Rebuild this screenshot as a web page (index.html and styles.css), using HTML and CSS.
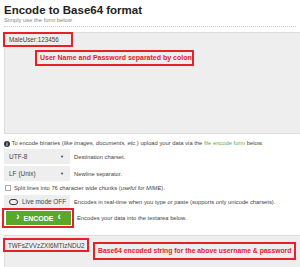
FILE: index.html
```html
<!DOCTYPE html>
<html>
<head><meta charset="utf-8"><link rel="stylesheet" href="styles.css"></head>
<body>
<div class="page">
  <h1 class="title">Encode to Base64 format</h1>
  <p class="sub">Simply use the form below</p>
  <div class="sep"></div>
  <div class="area top">
    <div class="mark input">MaleUser:123456</div>
    <div class="mark note n1">User Name and Password separated by colon</div>
  </div>
  <p class="info"><span class="ico">i</span> To encode binaries (<i>like images, documents, etc.</i>) upload your data via the <span class="link">file encode form</span> below.</p>
  <div class="row r1"><div class="sel">UTF-8<span class="arr">▼</span></div><span class="lbl">Destination charset.</span></div>
  <div class="row r2"><div class="sel">LF (Unix)<span class="arr">▼</span></div><span class="lbl">Newline separator.</span></div>
  <div class="row chk"><span class="box"></span><span class="lbl">Split lines into 76 character wide chunks (<i>useful for MIME</i>).</span></div>
  <div class="row r3"><div class="live"><span class="tog"></span>Live mode OFF</div><span class="lbl">Encodes in real-time when you type or paste (supports only unicode charsets).</span></div>
  <div class="row r4"><div class="encwrap"><div class="enc"><span class="chev">&#x203A;</span>ENCODE<span class="chev">&#x2039;</span></div></div><span class="lbl">Encodes your data into the textarea below.</span></div>
  <div class="area bottom">
    <div class="mark output">TWFsZVVzZXI6MTIzNDU2</div>
    <div class="mark note n2">Base64 encoded string for the above username &amp; password</div>
  </div>
</div>
</body>
</html>
```
FILE: styles.css
```css
* { box-sizing: border-box; }
html, body { margin: 0; padding: 0; background: #fff; }
body { font-family: "Liberation Sans", Arial, sans-serif; color: #333; width: 300px; height: 267px; overflow: hidden; }
.page { padding: 3px 0 0 4px; }
.title { font-size: 11.5px; font-weight: bold; margin: 0; line-height: 14px; color: #222; }
.sub { font-size: 5.8px; color: #888; margin: 0; line-height: 7px; }
.sep { border-top: 1px dotted #ccc; margin: 2px 4px 0 0; }
.area { background: #eeeeee; border: 1px solid #ddd; border-right: none; }
.top { height: 102px; margin-top: 5px; }
.mark { border: 2px solid #e8202a; display: block; white-space: nowrap; }
.input { font-size: 6.3px; color: #444; width: 70px; height: 15px; padding: 1px 0 0 4px; margin: -1px 0 0 -2px; line-height: 9px; }
.note { color: #e8202a; font-weight: bold; font-size: 7px; }
.n1 { width: 159px; height: 16px; padding: 2px 0 0 3px; margin: 3px 0 0 30px; }
.info { font-size: 5.8px; margin: 5px 0 0; line-height: 8px; color: #444; white-space: nowrap; }
.ico { display: inline-block; width: 6px; height: 6px; border-radius: 50%; background: #333; color: #fff; font-size: 5px; line-height: 6px; text-align: center; font-weight: bold; font-style: normal; vertical-align: -1px; }
.link { color: #6aa84f; }
.row { display: flex; align-items: center; gap: 4px; }
.r1 { margin-top: 2px; }
.r2 { margin-top: 2px; }
.sel { width: 66px; height: 15px; background: #eee; font-size: 6.5px; color: #444; padding: 0 0 0 5px; display: flex; align-items: center; justify-content: space-between; }
.arr { font-size: 4px; margin-right: 6px; color: #333; }
.lbl { font-size: 5.8px; color: #444; white-space: nowrap; }
.chk { margin-top: 1px; height: 12px; gap: 3px; }
.box { width: 6px; height: 6px; border: 1px solid #aaa; background: #fff; margin-left: 1px; }
.r3 { margin-top: 1px; }
.live { width: 66px; height: 13px; background: #eee; font-size: 6.4px; color: #444; display: flex; align-items: center; padding-left: 5px; gap: 4px; }
.tog { width: 9px; height: 6px; border: 1.5px solid #333; border-radius: 3px; }
.encwrap { border: 2px solid #e8202a; margin-left: -2px; padding: 1px 1px 1px 2px; }
.enc { width: 65px; height: 14px; background: #5aa829; color: #fff; font-weight: bold; font-size: 7px; display: flex; align-items: center; justify-content: center; gap: 4px; }
.chev { font-size: 10px; line-height: 10px; margin-top: -2px; }
.r4 .lbl { margin-left: -1px; }
.bottom { margin-top: 7px; height: 40px; padding-top: 2px; display: flex; align-items: flex-start; gap: 4px; }
.output { font-size: 6.3px; color: #444; width: 86px; height: 14px; padding: 2px 0 0 3px; margin-left: -2px; line-height: 8px; }
.n2 { width: 203px; height: 18px; margin-top: 4px; padding: 3px 0 0 3px; font-size: 6.8px; }
```
